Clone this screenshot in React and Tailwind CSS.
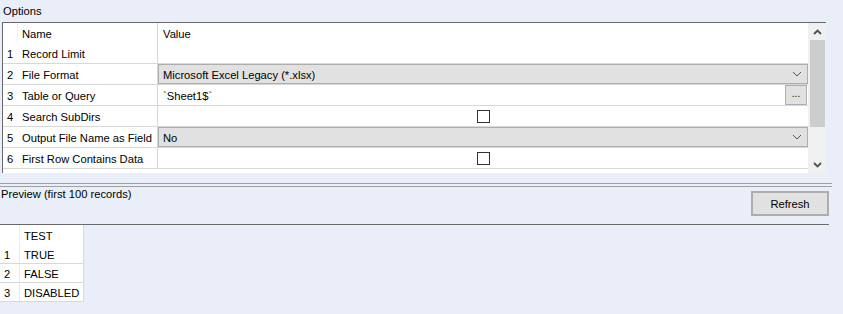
import React from "react";

const font = { fontFamily: '"Liberation Sans", Arial, sans-serif' };

const Chevron = () => (
  <svg width="10" height="6" viewBox="0 0 10 6" className="mr-[5px]">
    <path d="M1 1 L5 5 L9 1" fill="none" stroke="#555" strokeWidth="1" />
  </svg>
);

const Checkbox = () => (
  <div className="w-[13px] h-[13px] border border-[#333] bg-white" />
);

const rows = [
  { n: 1, name: "Record Limit", type: "text", value: "" },
  { n: 2, name: "File Format", type: "combo", value: "Microsoft Excel Legacy (*.xlsx)" },
  { n: 3, name: "Table or Query", type: "button", value: "`Sheet1$`" },
  { n: 4, name: "Search SubDirs", type: "check" },
  { n: 5, name: "Output File Name as Field", type: "combo", value: "No" },
  { n: 6, name: "First Row Contains Data", type: "check" },
];

function ValueCell({ row }) {
  if (row.type === "combo") {
    return (
      <div className="flex-1 h-full flex items-center justify-between bg-[#e1e1e1] border border-[#adadad] pl-[4px]">
        <span className="pt-[2px]">{row.value}</span>
        <Chevron />
      </div>
    );
  }
  if (row.type === "check") {
    return (
      <div className="flex-1 h-full flex items-center justify-center">
        <Checkbox />
      </div>
    );
  }
  if (row.type === "button") {
    return (
      <div className="flex-1 h-full flex items-center justify-between pl-[5px] pr-[1px]">
        <span className="pt-[2px]">{row.value}</span>
        <div className="w-[22px] h-[20px] bg-[#e1e1e1] border border-[#adadad] flex items-center justify-center text-[10px] leading-none pb-[2px]">
          ...
        </div>
      </div>
    );
  }
  return <div className="flex-1 h-full pl-[5px] pt-[2px] flex items-center">{row.value}</div>;
}

function OptionsGrid() {
  return (
    <div className="ml-[2px] w-[824px] h-[151px] flex border-t border-l border-[#696969] bg-white">
      <div className="flex-1 flex flex-col">
        <div className="h-[20px] flex items-center">
          <div className="w-[15px] h-full border-r border-[#f0f0f0]" />
          <div className="w-[140px] h-full pl-[4px] pt-[2px] flex items-center border-r border-[#d8d8d8]">Name</div>
          <div className="flex-1 pl-[5px] pt-[2px]">Value</div>
        </div>
        {rows.map((row) => (
          <div key={row.n} className="h-[21px] flex border-b border-[#d8d8d8]">
            <div className="w-[15px] pl-[4px] pt-[2px] flex items-center">{row.n}</div>
            <div className="w-[140px] pl-[4px] pt-[2px] flex items-center border-r border-[#d8d8d8]">{row.name}</div>
            <ValueCell row={row} />
          </div>
        ))}
      </div>
      <div className="w-[18px] h-full bg-[#f0f0f0] flex flex-col items-center">
        <div className="h-[17px] w-full flex items-center justify-center">
          <svg width="9" height="6" viewBox="0 0 9 6">
            <path d="M1 5 L4.5 1.5 L8 5" fill="none" stroke="#505050" strokeWidth="1.8" />
          </svg>
        </div>
        <div className="w-[15px] h-[87px] bg-[#cdcdcd]" />
        <div className="flex-1" />
        <div className="h-[17px] w-full flex items-center justify-center">
          <svg width="9" height="6" viewBox="0 0 9 6">
            <path d="M1 1 L4.5 4.5 L8 1" fill="none" stroke="#505050" strokeWidth="1.8" />
          </svg>
        </div>
      </div>
    </div>
  );
}

const preview = ["TRUE", "FALSE", "DISABLED"];

function PreviewGrid() {
  return (
    <div className="w-[829px] flex-1 border-t border-[#696969]">
      <div className="w-[84px] bg-white border-r border-[#d8d8d8]">
        <div className="h-[20px] flex items-center">
          <div className="w-[20px] h-full border-r border-[#f0f0f0]" />
          <div className="pl-[4px] pt-[2px]">TEST</div>
        </div>
        {preview.map((v, i) => (
          <div key={v} className="h-[19px] flex items-center border-b border-[#d8d8d8]">
            <div className="w-[20px] h-full pl-[4px] pt-[2px] flex items-center border-r border-[#e8e8e8]">{i + 1}</div>
            <div className="pl-[4px] pt-[2px]">{v}</div>
          </div>
        ))}
      </div>
    </div>
  );
}

export default function App() {
  return (
    <div
      className="w-[843px] h-[314px] bg-[#e9eef8] text-black text-[11.2px] flex flex-col overflow-hidden"
      style={font}
    >
      <div className="h-[22px] pl-[3px] pt-[6px] leading-none">Options</div>
      <OptionsGrid />
      <div className="h-[10px]" />
      <div className="w-[832px] h-[4px] border-t border-b border-[#a0a0a0]" />
      <div className="h-[37px] flex justify-between">
        <div className="pl-[1px] pt-[2px] leading-none">Preview (first 100 records)</div>
        <div className="mt-[4px] mr-[14px] w-[78px] h-[25px] bg-[#e1e1e1] border-2 border-[#adadad] flex items-center justify-center pt-[1px]">
          Refresh
        </div>
      </div>
      <PreviewGrid />
    </div>
  );
}
